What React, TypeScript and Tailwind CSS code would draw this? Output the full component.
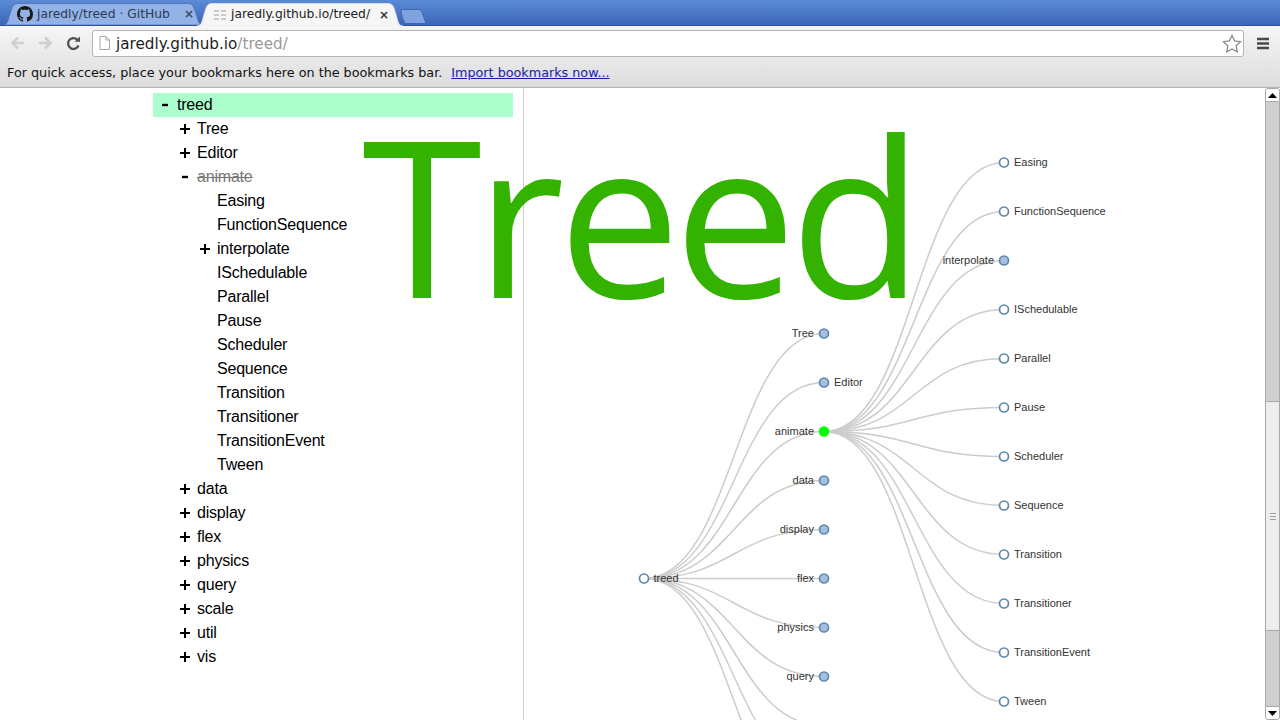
import React from "react";

const sans = "font-['Liberation_Sans',Arial,sans-serif]";
const ui = "font-['DejaVu_Sans',sans-serif]";

type Row = { label: string; level: number; toggle?: "+" | "-"; selected?: boolean; muted?: boolean };

const rows: Row[] = [
  { label: "treed", level: 0, toggle: "-", selected: true },
  { label: "Tree", level: 1, toggle: "+" },
  { label: "Editor", level: 1, toggle: "+" },
  { label: "animate", level: 1, toggle: "-", muted: true },
  { label: "Easing", level: 2 },
  { label: "FunctionSequence", level: 2 },
  { label: "interpolate", level: 2, toggle: "+" },
  { label: "ISchedulable", level: 2 },
  { label: "Parallel", level: 2 },
  { label: "Pause", level: 2 },
  { label: "Scheduler", level: 2 },
  { label: "Sequence", level: 2 },
  { label: "Transition", level: 2 },
  { label: "Transitioner", level: 2 },
  { label: "TransitionEvent", level: 2 },
  { label: "Tween", level: 2 },
  { label: "data", level: 1, toggle: "+" },
  { label: "display", level: 1, toggle: "+" },
  { label: "flex", level: 1, toggle: "+" },
  { label: "physics", level: 1, toggle: "+" },
  { label: "query", level: 1, toggle: "+" },
  { label: "scale", level: 1, toggle: "+" },
  { label: "util", level: 1, toggle: "+" },
  { label: "vis", level: 1, toggle: "+" },
];

function TreeRow({ r }: { r: Row }) {
  const indent = r.level === 0 ? "pl-0" : r.level === 1 ? "pl-5" : "pl-10";
  return (
    <div className={`flex h-6 items-center ${indent} ${r.selected ? "bg-[#aaffcc]" : ""}`}>
      <span className="flex w-6 shrink-0 items-center justify-center">
        {r.toggle === "+" && (
          <svg width="10" height="10" viewBox="0 0 10 10"><path d="M0 5h10M5 0v10" stroke="#000" strokeWidth="2" /></svg>
        )}
        {r.toggle === "-" && (
          <svg width="10" height="10" viewBox="0 0 10 10"><path d="M2 5h6" stroke="#000" strokeWidth="2.4" /></svg>
        )}
      </span>
      <span className={`text-base leading-6 tracking-[-0.2px] ${r.muted ? "text-[#777] line-through" : "text-black"}`}>{r.label}</span>
    </div>
  );
}

const OX = 644, MX = 824, RX = 1004, TOP = 87.5;
const level1 = ["Tree", "Editor", "animate", "data", "display", "flex", "physics", "query", "scale", "util", "vis"];
const level2 = ["Easing", "FunctionSequence", "interpolate", "ISchedulable", "Parallel", "Pause", "Scheduler", "Sequence", "Transition", "Transitioner", "TransitionEvent", "Tween"];
const SVG_X = 524;

function link(x0: number, y0: number, x1: number, y1: number) {
  const m = (x0 + x1) / 2;
  return `M${x0 - SVG_X},${y0 - TOP}C${m - SVG_X},${y0 - TOP} ${m - SVG_X},${y1 - TOP} ${x1 - SVG_X},${y1 - TOP}`;
}

function Graph() {
  const rootY = 578;
  const animY = 431;
  return (
    <svg width="741" height="632" className="block shrink-0">
      <g fill="none" stroke="#cccccc" strokeWidth="1.5">
        {level1.map((n, i) => (
          <path key={n} d={link(OX, rootY, MX, 333 + i * 49)} />
        ))}
        {level2.map((n, i) => (
          <path key={n} d={link(MX, animY, RX, 162 + i * 49)} />
        ))}
      </g>
      <g fontFamily="'Liberation Sans', Arial, sans-serif" fontSize="11" fill="#333">
        <circle cx={OX - SVG_X} cy={rootY - TOP} r="4.5" fill="#fff" stroke="#5b88ac" strokeWidth="1.7" />
        <text x={OX - SVG_X + 9.5} y={rootY - TOP + 3.5}>treed</text>
        {level1.map((n, i) => {
          const y = 333 + i * 49 - TOP;
          const isAnim = n === "animate";
          return (
            <g key={n}>
              <circle
                cx={MX - SVG_X}
                cy={y}
                r={isAnim ? 5.2 : 4.5}
                fill={isAnim ? "#00ff00" : "#a6bfdf"}
                stroke={isAnim ? "none" : "#5b88ac"}
                strokeWidth="1.7"
              />
              <text x={n === "Editor" ? MX - SVG_X + 10 : MX - SVG_X - 10} y={y + 3.5} textAnchor={n === "Editor" ? "start" : "end"}>{n}</text>
            </g>
          );
        })}
        {level2.map((n, i) => {
          const y = 162 + i * 49 - TOP;
          const closed = n === "interpolate";
          return (
            <g key={n}>
              <circle cx={RX - SVG_X} cy={y} r="4.5" fill={closed ? "#a6bfdf" : "#fff"} stroke="#5b88ac" strokeWidth="1.7" />
              <text x={closed ? RX - SVG_X - 10 : RX - SVG_X + 10} y={y + 3.5} textAnchor={closed ? "end" : "start"}>{n}</text>
            </g>
          );
        })}
      </g>
    </svg>
  );
}

function Scrollbar() {
  return (
    <div className="flex h-full w-[15px] shrink-0 flex-col items-stretch bg-white">
      <div className="flex h-[14px] items-center justify-center rounded-t-[3px] border border-[#a8a8a8] bg-white">
        <svg width="9" height="5" viewBox="0 0 9 5"><path d="M4.5 0L9 5H0z" fill="#000" /></svg>
      </div>
      <div className="h-[299px] border-x border-[#a8a8a8] bg-[#cfcfcf]" />
      <div className="flex h-[230px] items-center justify-center border border-[#a8a8a8] bg-[#ededed]">
        <svg width="6" height="7" viewBox="0 0 6 7"><path d="M0 .5h6M0 3.5h6M0 6.5h6" stroke="#a0a0a0" /></svg>
      </div>
      <div className="flex-1 border-x border-[#a8a8a8] bg-[#cfcfcf]" />
      <div className="flex h-[14px] items-center justify-center rounded-b-[3px] border border-[#a8a8a8] bg-white">
        <svg width="9" height="5" viewBox="0 0 9 5"><path d="M0 0h9L4.5 5z" fill="#000" /></svg>
      </div>
    </div>
  );
}

function TabShape({ active, w, h }: { active?: boolean; w: number; h: number }) {
  return (
    <svg width={w} height={h} className="absolute left-0 top-0" viewBox={`0 0 ${w} ${h}`}>
      <path
        d={`M0 ${h}C4 ${h} 5 ${h - 4} 6 ${h - 8}L9 5C10 2 12 .5 15 .5H${w - 15}C${w - 12} .5 ${w - 10} 2 ${w - 9} 5L${w - 6} ${h - 8}C${w - 5} ${h - 4} ${w - 4} ${h} ${w} ${h}Z`}
        fill={active ? "#f6f6f6" : "#93b2e6"}
        stroke={active ? "#e4e8f0" : "#4a6fb0"}
        strokeWidth="0.75"
      />
    </svg>
  );
}

function GitHubMark() {
  return (
    <svg width="16" height="16" viewBox="0 0 16 16" fill="#1a1a1a">
      <path d="M8 0C3.58 0 0 3.58 0 8c0 3.54 2.29 6.53 5.47 7.59.4.07.55-.17.55-.38 0-.19-.01-.82-.01-1.49-2.01.37-2.53-.49-2.69-.94-.09-.23-.48-.94-.82-1.13-.28-.15-.68-.52-.01-.53.63-.01 1.08.58 1.23.82.72 1.21 1.87.87 2.33.66.07-.52.28-.87.51-1.07-1.78-.2-3.64-.89-3.64-3.95 0-.87.31-1.59.82-2.15-.08-.2-.36-1.02.08-2.12 0 0 .67-.21 2.2.82.64-.18 1.32-.27 2-.27s1.36.09 2 .27c1.53-1.04 2.2-.82 2.2-.82.44 1.1.16 1.92.08 2.12.51.56.82 1.27.82 2.15 0 3.07-1.87 3.75-3.65 3.95.29.25.54.73.54 1.48 0 1.07-.01 1.93-.01 2.2 0 .21.15.46.55.38A8.01 8.01 0 0016 8c0-4.42-3.58-8-8-8z" />
    </svg>
  );
}

function TabStrip() {
  return (
    <div className={`flex h-[26px] items-end border-b border-[#2f5296] bg-gradient-to-b from-[#5b8bd6] to-[#3c66b8] pl-[3px] ${ui}`}>
      <div className="relative h-[22px] w-[200px] shrink-0">
        <TabShape w={200} h={22} />
        <div className="relative flex h-full items-center pl-[14px]">
          <GitHubMark />
          <span className="ml-1 text-[12.3px] text-[#2a3a55]">jaredly/treed · GitHub</span>
          <span className="ml-auto mr-[9px] text-[12px] font-bold leading-none text-[#3a4a66]">×</span>
        </div>
      </div>
      <div className="relative z-10 -mb-px -ml-[6px] h-[23px] w-[206px] shrink-0">
        <TabShape w={206} h={23} active />
        <div className="relative flex h-full items-center pl-[17px]">
          <svg width="12" height="10" viewBox="0 0 12 10" className="mr-[5px]"><path d="M0 1h5M7 1h5M0 5h5M7 5h5M0 9h5M7 9h5" stroke="#bdbdbd" strokeWidth="1.5" /></svg>
          <span className="text-[12.3px] text-[#222]">jaredly.github.io/treed/</span>
          <span className="ml-auto mr-[14px] text-[12px] font-bold leading-none text-[#333]">×</span>
        </div>
      </div>
      <div className="relative -ml-[3px] mb-[1px] h-[15px] w-[27px] shrink-0">
        <svg width="27" height="15" viewBox="0 0 27 15"><path d="M1 .5H18C20 .5 21 1 22 3L26 14.500H5C3 11 1 5 1 .5Z" fill="#7ea3de" stroke="#3f66ad" /></svg>
      </div>
    </div>
  );
}

function Toolbar() {
  return (
    <div className="flex h-[34px] items-center">
      <div className="flex w-[92px] shrink-0 items-center pl-[10px]">
        <svg width="15" height="14" viewBox="0 0 15 14" className="mr-[13px]"><path d="M14 7H3M8 1.5L2.500 7 8 12.500" stroke="#cfcfcf" strokeWidth="2.600" fill="none" /></svg>
        <svg width="15" height="14" viewBox="0 0 15 14" className="mr-[13px]"><path d="M1 7h11M7 1.500L12.500 7 7 12.500" stroke="#cfcfcf" strokeWidth="2.600" fill="none" /></svg>
        <svg width="15" height="15" viewBox="0 0 15 15"><path d="M12.500 9.500A5.400 5.400 0 1 1 11.300 3.600" stroke="#4f4f4f" strokeWidth="2.300" fill="none" /><path d="M8.600 5.800h5.400V.4z" fill="#4f4f4f" /></svg>
      </div>
      <div className="flex h-[27px] w-[1152px] shrink-0 items-center rounded-[3px] border border-[#b5b5b5] bg-white pl-[6px] pr-[1px]">
        <svg width="11" height="14" viewBox="0 0 11 14" className="mr-[6px]"><path d="M1 .5h6l3.500 3.500v9.500H1zM7 .5V4h3.500" fill="#fff" stroke="#a8a8a8" /></svg>
        <span className={`pt-[3px] text-[15.2px] leading-none text-[#1c1c1c] ${ui}`}>
          jaredly.github.io<span className="text-[#9a9a9a]">/treed/</span>
        </span>
        <svg width="20" height="19" viewBox="0 0 20 19" className="ml-auto"><path d="M10 1.500l2.600 5.400 5.900.8-4.300 4.100 1 5.900L10 14.900l-5.200 2.800 1-5.900L1.500 7.700l5.900-.8z" fill="#fff" stroke="#8a8a8a" strokeWidth="1.300" /></svg>
      </div>
      <div className="flex flex-1 justify-center pl-[1px]">
        <svg width="14" height="13" viewBox="0 0 14 13"><path d="M1 2h12M1 6.500h12M1 11h12" stroke="#4a4a4a" strokeWidth="2.300" /></svg>
      </div>
    </div>
  );
}

function BookmarkBar() {
  return (
    <div className={`flex h-[28px] items-center border-b border-[#b4b4b4] pb-[1px] pl-[7px] text-[12.75px] text-[#111] ${ui}`}>
      <span>For quick access, place your bookmarks here on the bookmarks bar.</span>
      <span className="ml-[9px] text-[#1a1aa6] underline">Import bookmarks now...</span>
    </div>
  );
}

export default function App() {
  return (
    <div className={`flex h-screen w-[1280px] flex-col overflow-hidden bg-white ${sans}`}>
      <TabStrip />
      <div className="bg-gradient-to-b from-[#f6f6f6] to-[#dcdcdc]">
        <Toolbar />
        <BookmarkBar />
      </div>
      <div className="relative flex min-h-0 flex-1 overflow-hidden">
        <div className="w-[524px] shrink-0 border-r border-[#cfcfcf] pl-[153px] pt-[5px]">
          <div className="w-[360px]">
            {rows.map((r) => (
              <TreeRow key={r.label} r={r} />
            ))}
          </div>
        </div>
        <Graph />
        <Scrollbar />
        <div className="pointer-events-none absolute left-[362px] top-[1px] font-['Open_Sans',sans-serif] text-[218px] leading-[250px] tracking-[-6.5px] text-[#33b300] [font-kerning:none]">Treed</div>
      </div>
    </div>
  );
}
